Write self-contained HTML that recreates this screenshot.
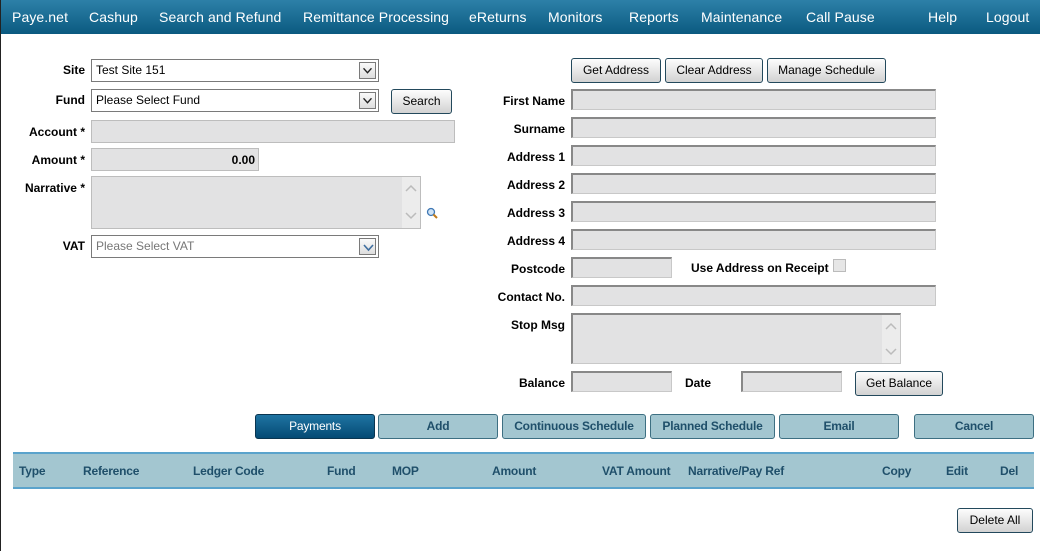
<!DOCTYPE html>
<html><head><meta charset="utf-8"><style>
*{box-sizing:border-box;margin:0;padding:0}
body{width:1040px;height:551px;background:#fff;position:relative;overflow:hidden;font-family:"Liberation Sans",sans-serif;font-size:12px;color:#000}
.nav{position:absolute;left:0;top:0;width:1040px;height:34px;background:linear-gradient(#2d80a8,#0b5a80)}
.nav span{position:absolute;top:9px;color:#fff;font-size:14px;letter-spacing:0.1px}
.a{position:absolute}
.lbl{position:absolute;font-weight:bold;font-size:12px;text-align:right;white-space:nowrap}
.sel{position:absolute;height:23px;border:1px solid #7a7a7a;background:#fff;padding:3px 4px;font-size:12px}
.sel .dd{position:absolute;right:2px;top:2px;width:17px;height:17px;border:1px solid #7a7a7a;background:linear-gradient(#fafafa,#ddd)}
.inp{position:absolute;height:21px;background:#e2e2e3;border:1px solid #c8c8c8;border-top:2px solid #888;border-left:2px solid #888}
.inp2{position:absolute;background:#e2e2e3;border:1px solid #bdbdbd}
.btn{position:absolute;height:25px;border:1px solid #23495c;border-radius:3px;background:linear-gradient(#fdfdfd,#d2d2d2);font-size:12px;text-align:center;line-height:23px}
.ab{position:absolute;top:414px;height:25px;border:1px solid #3d6f82;border-radius:3px;background:#a3c6d0;color:#1f4f6a;font-weight:bold;font-size:12px;text-align:center;line-height:23px;letter-spacing:-0.2px}
.th{position:absolute;top:464px;font-weight:bold;color:#1f4f6a;font-size:12px;letter-spacing:-0.2px}
</style></head><body>
<div class="a" style="left:0;top:0;width:1px;height:551px;background:#222;z-index:5"></div>
<div class="nav">
<span style="left:12px">Paye.net</span><span style="left:89px">Cashup</span><span style="left:159px">Search and Refund</span><span style="left:303px">Remittance Processing</span><span style="left:469px">eReturns</span><span style="left:548px">Monitors</span><span style="left:629px">Reports</span><span style="left:701px">Maintenance</span><span style="left:806px">Call Pause</span><span style="left:928px">Help</span><span style="left:986px">Logout</span>
</div>
<svg width="0" height="0" style="position:absolute"><defs><symbol id="chev" viewBox="0 0 17 17"><path d="M4 6 L8.5 11 L13 6" fill="none" stroke="#222" stroke-width="1.6"/></symbol></defs></svg>

<div class="lbl" style="right:955px;top:63px">Site</div>
<div class="sel" style="left:91px;top:59px;width:288px">Test Site 151<div class="dd"><svg width="15" height="15"><use href="#chev"/></svg></div></div>
<div class="lbl" style="right:955px;top:93px">Fund</div>
<div class="sel" style="left:91px;top:89px;width:288px">Please Select Fund<div class="dd"><svg width="15" height="15"><use href="#chev"/></svg></div></div>
<div class="btn" style="left:391px;top:89px;width:61px">Search</div>
<div class="lbl" style="right:955px;top:125px">Account *</div>
<div class="inp2" style="left:91px;top:120px;width:364px;height:23px"></div>
<div class="lbl" style="right:955px;top:153px">Amount *</div>
<div class="inp2" style="left:91px;top:148px;width:168px;height:23px;text-align:right;font-weight:bold;padding:4px 3px">0.00</div>
<div class="lbl" style="right:955px;top:181px">Narrative *</div>
<div class="inp2" style="left:91px;top:176px;width:330px;height:53px"><div style="position:absolute;right:0;top:0;width:18px;height:51px;background:#ececec"><svg width="18" height="51"><path d="M4 14 L9 9 L14 14 M4 36 L9 41 L14 36" fill="none" stroke="#bbb" stroke-width="1.5"/></svg></div></div>
<svg class="a" style="left:426px;top:207px" width="12" height="12"><circle cx="5" cy="5" r="3.5" fill="#cfe3f5" stroke="#3f78b5" stroke-width="1.3"/><path d="M7.5 7.5 L11 11" stroke="#c07a1a" stroke-width="2"/></svg>
<div class="lbl" style="right:955px;top:239px">VAT</div>
<div class="sel" style="left:91px;top:235px;width:288px;color:#777">Please Select VAT<div class="dd"><svg width="15" height="15"><path d="M4 6 L8.5 11 L13 6" fill="none" stroke="#3f6e9f" stroke-width="1.6"/></svg></div></div>

<div class="btn" style="left:571px;top:58px;width:90px">Get Address</div>
<div class="btn" style="left:665px;top:58px;width:98px">Clear Address</div>
<div class="btn" style="left:767px;top:58px;width:119px">Manage Schedule</div>

<div class="lbl" style="right:475px;top:94px">First Name</div><div class="inp" style="left:571px;top:89px;width:365px"></div>
<div class="lbl" style="right:475px;top:122px">Surname</div><div class="inp" style="left:571px;top:117px;width:365px"></div>
<div class="lbl" style="right:475px;top:150px">Address 1</div><div class="inp" style="left:571px;top:145px;width:365px"></div>
<div class="lbl" style="right:475px;top:178px">Address 2</div><div class="inp" style="left:571px;top:173px;width:365px"></div>
<div class="lbl" style="right:475px;top:206px">Address 3</div><div class="inp" style="left:571px;top:201px;width:365px"></div>
<div class="lbl" style="right:475px;top:234px">Address 4</div><div class="inp" style="left:571px;top:229px;width:365px"></div>
<div class="lbl" style="right:475px;top:262px">Postcode</div><div class="inp" style="left:571px;top:257px;width:101px"></div>
<div class="lbl" style="left:691px;top:261px">Use Address on Receipt</div>
<div class="a" style="left:833px;top:259px;width:13px;height:13px;border:1px solid #bbb;background:#e6e6e6"></div>
<div class="lbl" style="right:475px;top:290px">Contact No.</div><div class="inp" style="left:571px;top:285px;width:365px"></div>
<div class="lbl" style="right:475px;top:318px">Stop Msg</div>
<div class="inp" style="left:571px;top:313px;width:330px;height:51px"><div style="position:absolute;right:0;top:0;width:18px;height:48px;background:#ececec"><svg width="18" height="48"><path d="M4 14 L9 9 L14 14 M4 34 L9 39 L14 34" fill="none" stroke="#bbb" stroke-width="1.5"/></svg></div></div>
<div class="lbl" style="right:475px;top:376px">Balance</div><div class="inp" style="left:571px;top:371px;width:101px"></div>
<div class="lbl" style="left:685px;top:376px">Date</div><div class="inp" style="left:741px;top:371px;width:101px"></div>
<div class="btn" style="left:855px;top:371px;width:88px">Get Balance</div>

<div class="ab" style="left:255px;width:120px;background:linear-gradient(#1f74a2,#044a74);color:#fff;font-weight:normal;border-color:#0a3550">Payments</div>
<div class="ab" style="left:378px;width:120px">Add</div>
<div class="ab" style="left:502px;width:144px">Continuous Schedule</div>
<div class="ab" style="left:650px;width:125px">Planned Schedule</div>
<div class="ab" style="left:779px;width:120px">Email</div>
<div class="ab" style="left:914px;width:120px">Cancel</div>

<div class="a" style="left:13px;top:452px;width:1021px;height:37px;background:#a3c6d0;border-top:2px solid #5aa3cc;border-bottom:2px solid #5aa3cc"></div>
<div class="th" style="left:19px">Type</div><div class="th" style="left:83px">Reference</div><div class="th" style="left:193px">Ledger Code</div><div class="th" style="left:327px">Fund</div><div class="th" style="left:392px">MOP</div><div class="th" style="left:492px">Amount</div><div class="th" style="left:602px">VAT Amount</div><div class="th" style="left:688px">Narrative/Pay Ref</div><div class="th" style="left:882px">Copy</div><div class="th" style="left:946px">Edit</div><div class="th" style="left:1000px">Del</div>

<div class="btn" style="left:957px;top:508px;width:76px">Delete All</div>
</body></html>
